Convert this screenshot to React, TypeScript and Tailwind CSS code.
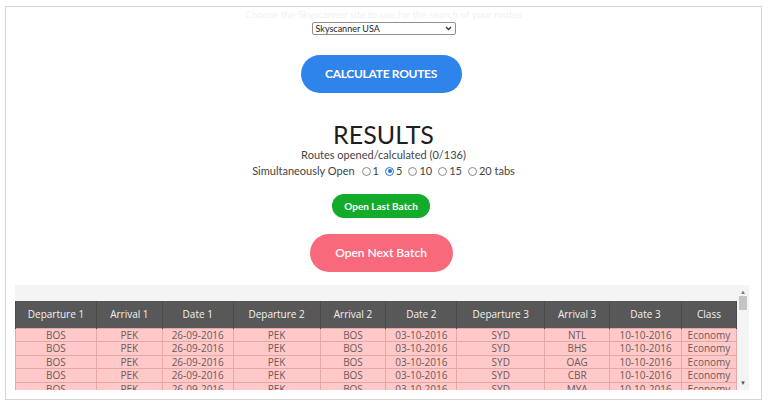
import React from "react";

type Route = {
  dep1: string;
  arr1: string;
  date1: string;
  dep2: string;
  arr2: string;
  date2: string;
  dep3: string;
  arr3: string;
  date3: string;
  cls: string;
};

const columns = [
  { label: "Departure 1", w: "w-[81px]" },
  { label: "Arrival 1", w: "w-[66px]" },
  { label: "Date 1", w: "w-[71px]" },
  { label: "Departure 2", w: "w-[87px]" },
  { label: "Arrival 2", w: "w-[66px]" },
  { label: "Date 2", w: "w-[71px]" },
  { label: "Departure 3", w: "w-[88px]" },
  { label: "Arrival 3", w: "w-[65px]" },
  { label: "Date 3", w: "w-[72px]" },
  { label: "Class", w: "w-[55px]" },
];

const arrivals3 = ["NTL", "BHS", "OAG", "CBR", "MYA"];

const routes: Route[] = arrivals3.map((a) => ({
  dep1: "BOS",
  arr1: "PEK",
  date1: "26-09-2016",
  dep2: "PEK",
  arr2: "BOS",
  date2: "03-10-2016",
  dep3: "SYD",
  arr3: a,
  date3: "10-10-2016",
  cls: "Economy",
}));

const tabOptions = ["1", "5", "10", "15", "20 tabs"];

function Radio({ checked }: { checked?: boolean }) {
  return (
    <span
      className={`inline-block w-[9px] h-[9px] rounded-full border mr-[2px] ${
        checked ? "border-[#2a6fd6] bg-white p-[1.5px]" : "border-[#8a8a8a] bg-white"
      }`}
    >
      {checked && <span className="block w-full h-full rounded-full bg-[#2a6fd6]" />}
    </span>
  );
}

function RoutesTable() {
  return (
    <div className="flex h-[105px] bg-[#f4f4f4] overflow-hidden">
      <div className="flex-1 pt-[16px] overflow-hidden">
        <table
          className="border-collapse text-[10px] text-center"
          style={{ fontFamily: '"Open Sans", "Noto Sans", sans-serif' }}
        >
          <thead>
            <tr className="bg-[#585858] text-[#f2f2f2] h-[27px]">
              {columns.map((c) => (
                <th
                  key={c.label}
                  className={`${c.w} font-normal border-x border-[#4a4a4a] p-0`}
                >
                  {c.label}
                </th>
              ))}
            </tr>
          </thead>
          <tbody>
            {routes.map((r, i) => (
              <tr
                key={i}
                className="bg-[#ffc9c9] text-[#6b5a5a] h-[13.5px] leading-[12px]"
              >
                {[r.dep1, r.arr1, r.date1, r.dep2, r.arr2, r.date2, r.dep3, r.arr3, r.date3, r.cls].map(
                  (v, j) => (
                    <td key={j} className="border border-[#e8a7a7] p-0">
                      {v}
                    </td>
                  )
                )}
              </tr>
            ))}
          </tbody>
        </table>
      </div>
      {/* scrollbar */}
      <div className="w-[12px] flex flex-col items-center bg-[#f4f4f4]">
        <span className="text-[6px] text-[#777] leading-none mt-[4px]">▲</span>
        <div className="w-[8px] h-[14px] bg-[#c4c4c4] mt-[1px]" />
        <div className="flex-1" />
        <span className="text-[6px] text-[#555] leading-none mb-[4px]">▼</span>
      </div>
    </div>
  );
}

export default function App() {
  return (
    <div className="w-[768px] h-[409px] bg-white pt-[6px] pl-[5px] pr-[6px] overflow-hidden">
      <div
        className="h-[394px] border border-[#d6d6d6] flex flex-col items-center"
        style={{ fontFamily: 'Lato, "Noto Sans", sans-serif' }}
      >
        <p className="text-[10px] text-[#f1f1f1] leading-none mt-[2px]">
          Choose the Skyscanner site to use for the search of your routes
        </p>
        <div className="mt-[3px] w-[144px] h-[13px] border border-[#8f8f8f] rounded-[2px] flex items-center justify-between px-[3px] bg-white">
          <span className="text-[9px] text-[#222] leading-none">Skyscanner USA</span>
          <svg width="7" height="5" viewBox="0 0 7 5">
            <path d="M1 1 L3.5 3.5 L6 1" stroke="#333" strokeWidth="1.4" fill="none" />
          </svg>
        </div>

        <button className="mt-[20px] mr-[5px] w-[161px] h-[38px] rounded-full bg-[#2f84ec] text-white text-[12px] font-bold tracking-tight">
          CALCULATE ROUTES
        </button>

        <h2 className="mt-[27px] text-[25px] leading-[28px] text-[#1e1e1e] font-normal">
          RESULTS
        </h2>
        <p className="text-[11px] leading-[14px] text-[#444]">
          Routes opened/calculated (0/136)
        </p>
        <div className="mt-[2px] flex items-center text-[11px] leading-[14px] text-[#444]">
          <span className="mr-[1px]">Simultaneously Open</span>
          {tabOptions.map((t) => (
            <label key={t} className="flex items-center ml-[6px]">
              <Radio checked={t === "5"} />
              {t}
            </label>
          ))}
        </div>

        <button className="mt-[16px] mr-[5px] w-[98px] h-[24px] rounded-full bg-[#12ab2a] text-white text-[10px] font-bold">
          Open Last Batch
        </button>
        <button className="mt-[16px] mr-[5px] w-[143px] h-[38px] rounded-full bg-[#f86a7b] text-white text-[12px] font-semibold">
          Open Next Batch
        </button>

        <div className="self-stretch mt-[13px] pl-[9px] pr-[12px]">
          <RoutesTable />
        </div>
      </div>
    </div>
  );
}
